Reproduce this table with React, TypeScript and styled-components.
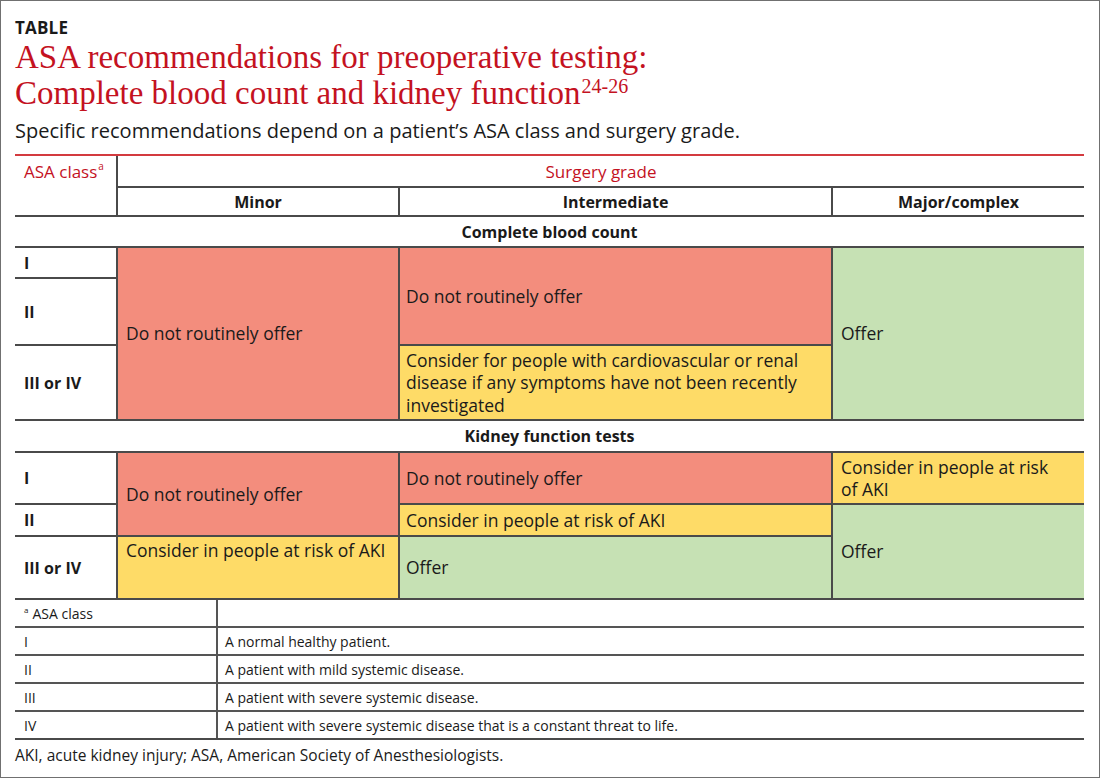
import React from "react";
import styled, { createGlobalStyle, css } from "styled-components";

const GlobalStyle = createGlobalStyle`
  html, body { margin: 0; padding: 0; background: #ffffff; }
  body { font-family: "Open Sans", "Noto Sans", sans-serif; color: #1a1a1a; }
  * { box-sizing: border-box; }
`;

const RED = "#c4121f";
const LINE = "#4a4a4a";

const Frame = styled.div`
  width: 1100px;
  height: 778px;
  border: 1px solid #707070;
  padding: 16px 15px 0 14px;
  display: flex;
  flex-direction: column;
`;

const Kicker = styled.div`
  font-family: "Open Sans", sans-serif;
  font-weight: 700;
  font-size: 17px;
  line-height: 22px;
  letter-spacing: 0.2px;
  color: #1a1a1a;
`;

const Title = styled.h1`
  margin: 0;
  font-family: "Liberation Serif", "DejaVu Serif", serif;
  font-weight: 400;
  font-size: 33px;
  line-height: 36px;
  color: ${RED};
`;

const Sup = styled.span`
  font-size: 20px;
  line-height: 0;
  position: relative;
  top: -11px;
  margin-left: 1px;
`;

const Subtitle = styled.p`
  margin: 7px 0 0 0;
  font-size: 20px;
  line-height: 26px;
  color: #1a1a1a;
`;

const MainGrid = styled.div`
  margin-top: 10px;
  display: grid;
  grid-template-columns: 101px 280px 431px 251px;
  grid-template-rows: 30px 27px 29px 29px 65px 73px 30px 50px 30px 61px;
  column-gap: 2px;
  row-gap: 2px;
  background: ${LINE};
  border-top: 2px solid #d33a3f;
`;

type Place = { $col: string; $row: string };

const Cell = styled.div<Place>`
  grid-column: ${(p) => p.$col};
  grid-row: ${(p) => p.$row};
  background: #ffffff;
  display: flex;
  font-size: 16px;
  line-height: 22px;
`;

const HeadCell = styled(Cell)<{ $red?: boolean; $center?: boolean }>`
  align-items: ${(p) => (p.$red ? "flex-start" : "center")};
  justify-content: ${(p) => (p.$center ? "center" : "flex-start")};
  padding: ${(p) => (p.$red ? "5px 9px 0" : "0 9px")};
  color: ${(p) => (p.$red ? RED : "#1a1a1a")};
  font-weight: ${(p) => (p.$red ? 400 : 700)};
  font-size: ${(p) => (p.$red ? 17 : 16)}px;
`;

const HeadSup = styled.span`
  font-size: 10px;
  position: relative;
  top: -6px;
  margin-left: 1px;
`;

const SectionCell = styled(Cell)`
  justify-content: center;
  align-items: center;
  font-weight: 700;
`;

const RowLabel = styled(Cell)`
  align-items: center;
  padding: 0 9px;
  font-weight: 700;
`;

const tones = {
  red: "#f38d7d",
  yellow: "#fedb67",
  green: "#c6e1b4",
};

const ValueCell = styled(Cell)<{
  $tone: keyof typeof tones;
  $top?: boolean;
  $pad?: number;
  $padR?: number;
}>`
  background: ${(p) => tones[p.$tone]};
  font-size: 17.5px;
  line-height: 22.5px;
  padding: ${(p) => (p.$top ? "2px" : "0")} ${(p) => p.$padR ?? 4}px 0 ${(p) => p.$pad ?? 8}px;
  ${(p) =>
    p.$top
      ? css`
          align-items: flex-start;
        `
      : css`
          align-items: center;
        `}
`;

const FootGrid = styled.div`
  display: grid;
  grid-template-columns: 201px 866px;
  grid-template-rows: repeat(5, 26px);
  gap: 2px;
  background: #555555;
  border-top: 2px solid ${LINE};
  border-bottom: 2px solid ${LINE};
`;

const FootCell = styled.div<{ $first?: boolean }>`
  background: #ffffff;
  display: flex;
  align-items: center;
  padding-left: ${(p) => (p.$first ? 9 : 7)}px;
  font-size: 14px;
  color: #1a1a1a;
`;

const FootSup = styled.span`
  font-size: 8px;
  position: relative;
  top: -4px;
  margin-right: 4px;
`;

const Note = styled.div`
  padding-top: 4px;
  font-size: 15.5px;
  line-height: 22px;
  color: #1a1a1a;
`;

const classes: [string, string][] = [
  ["I", "A normal healthy patient."],
  ["II", "A patient with mild systemic disease."],
  ["III", "A patient with severe systemic disease."],
  ["IV", "A patient with severe systemic disease that is a constant threat to life."],
];

export default function App() {
  return (
    <>
      <GlobalStyle />
      <Frame>
        <Kicker>TABLE</Kicker>
        <Title>
          ASA recommendations for preoperative testing:
          <br />
          Complete blood count and kidney function<Sup>24-26</Sup>
        </Title>
        <Subtitle>Specific recommendations depend on a patient’s ASA class and surgery grade.</Subtitle>

        <MainGrid>
          <HeadCell $col="1" $row="1 / 3" $red>
            ASA class<HeadSup>a</HeadSup>
          </HeadCell>
          <HeadCell $col="2 / 5" $row="1" $red $center>
            Surgery grade
          </HeadCell>
          <HeadCell $col="2" $row="2" $center>Minor</HeadCell>
          <HeadCell $col="3" $row="2" $center>Intermediate</HeadCell>
          <HeadCell $col="4" $row="2" $center>Major/complex</HeadCell>

          <SectionCell $col="1 / 5" $row="3">Complete blood count</SectionCell>
          <RowLabel $col="1" $row="4">I</RowLabel>
          <RowLabel $col="1" $row="5">II</RowLabel>
          <RowLabel $col="1" $row="6">III or IV</RowLabel>
          <ValueCell $col="2" $row="4 / 7" $tone="red">Do not routinely offer</ValueCell>
          <ValueCell $col="3" $row="4 / 6" $tone="red" $pad={6}>Do not routinely offer</ValueCell>
          <ValueCell $col="3" $row="6" $tone="yellow" $pad={6} $padR={16}>
            Consider for people with cardiovascular or renal disease if any symptoms have not been recently
            investigated
          </ValueCell>
          <ValueCell $col="4" $row="4 / 7" $tone="green">Offer</ValueCell>

          <SectionCell $col="1 / 5" $row="7">Kidney function tests</SectionCell>
          <RowLabel $col="1" $row="8">I</RowLabel>
          <RowLabel $col="1" $row="9">II</RowLabel>
          <RowLabel $col="1" $row="10">III or IV</RowLabel>
          <ValueCell $col="2" $row="8 / 10" $tone="red">Do not routinely offer</ValueCell>
          <ValueCell $col="2" $row="10" $tone="yellow" $top $padR={2}>
            Consider in people at risk of AKI
          </ValueCell>
          <ValueCell $col="3" $row="8" $tone="red" $pad={6}>Do not routinely offer</ValueCell>
          <ValueCell $col="3" $row="9" $tone="yellow" $pad={6}>Consider in people at risk of AKI</ValueCell>
          <ValueCell $col="3" $row="10" $tone="green" $pad={6}>Offer</ValueCell>
          <ValueCell $col="4" $row="8" $tone="yellow" $padR={20}>
            Consider in people at risk of AKI
          </ValueCell>
          <ValueCell $col="4" $row="9 / 11" $tone="green">Offer</ValueCell>
        </MainGrid>

        <FootGrid>
          <FootCell $first>
            <FootSup>a</FootSup>ASA class
          </FootCell>
          <FootCell />
          {classes.map(([c, d]) => (
            <React.Fragment key={c}>
              <FootCell $first>{c}</FootCell>
              <FootCell>{d}</FootCell>
            </React.Fragment>
          ))}
        </FootGrid>
        <Note>AKI, acute kidney injury; ASA, American Society of Anesthesiologists.</Note>
      </Frame>
    </>
  );
}
